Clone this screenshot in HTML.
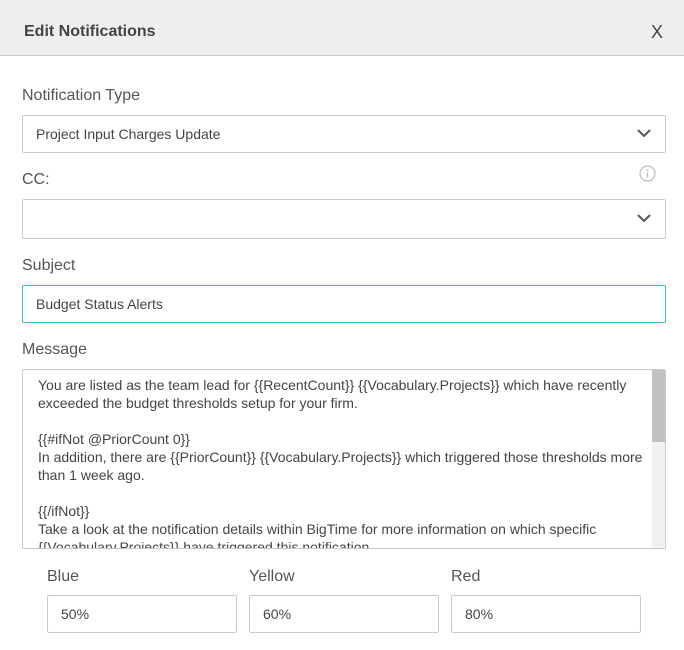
<!DOCTYPE html>
<html><head><style>
*{box-sizing:border-box;margin:0;padding:0}
body{width:684px;height:650px;background:#fff;font-family:"Liberation Sans",Arial,sans-serif;color:#444;position:relative;overflow:hidden}
.a{position:absolute}
.hdr{left:0;top:0;width:684px;height:56px;background:#efeff1;border-bottom:1px solid #c8c8c8}
.lbl{font-size:16px;color:#555}
.box{border:1px solid #c9c9c9;border-radius:2px;background:#fff;font-size:14px;color:#444;padding-left:13px;display:flex;align-items:center}
.chev{position:absolute;right:14px;top:50%;margin-top:-5px}
</style></head><body>
<div class="a hdr"></div>
<div class="a" style="left:24px;top:23px;font-size:16px;font-weight:bold;color:#444">Edit Notifications</div>
<div class="a" style="left:651px;top:22px;font-size:18px;color:#444">X</div>

<div class="a lbl" style="left:22px;top:87px">Notification Type</div>
<div class="a box" style="left:22px;top:115px;width:644px;height:38px">Project Input Charges Update
<svg class="chev" width="14" height="9" viewBox="0 0 14 9"><path d="M1 1l6 6 6-6" fill="none" stroke="#555" stroke-width="2"/></svg></div>

<div class="a lbl" style="left:22px;top:171px">CC:</div>
<svg class="a" style="left:639px;top:165px" width="17" height="17" viewBox="0 0 17 17"><circle cx="8.5" cy="8.5" r="7.5" fill="none" stroke="#bbb" stroke-width="1.2"/><circle cx="8.5" cy="5" r="1" fill="#bbb"/><path d="M8.5 7.5v5" stroke="#bbb" stroke-width="1.4"/></svg>
<div class="a box" style="left:22px;top:199px;width:644px;height:40px">
<svg class="chev" width="14" height="9" viewBox="0 0 14 9"><path d="M1 1l6 6 6-6" fill="none" stroke="#555" stroke-width="2"/></svg></div>

<div class="a lbl" style="left:22px;top:257px">Subject</div>
<div class="a box" style="left:22px;top:285px;width:644px;height:38px;border-color:#3bbcc6">Budget Status Alerts</div>

<div class="a lbl" style="left:22px;top:341px">Message</div>
<div class="a" style="left:22px;top:369px;width:644px;height:180px;border:1px solid #c9c9c9;border-radius:2px;overflow:hidden">
<div style="position:absolute;left:15px;top:6px;width:612px;font-size:14px;line-height:18px;color:#444">You are listed as the team lead for {{RecentCount}} {{Vocabulary.Projects}} which have recently exceeded the budget thresholds setup for your firm.<br><br>{{#ifNot @PriorCount 0}}<br>In addition, there are {{PriorCount}} {{Vocabulary.Projects}} which triggered those thresholds more than 1 week ago.<br><br>{{/ifNot}}<br>Take a look at the notification details within BigTime for more information on which specific {{Vocabulary.Projects}} have triggered this notification.</div>
<div style="position:absolute;right:0;top:0;width:13px;height:100%;background:#f1f1f1"></div>
<div style="position:absolute;right:0;top:0;width:13px;height:72px;background:#c1c1c1"></div>
</div>

<div class="a lbl" style="left:47px;top:568px">Blue</div>
<div class="a lbl" style="left:249px;top:568px">Yellow</div>
<div class="a lbl" style="left:451px;top:568px">Red</div>
<div class="a box" style="left:47px;top:595px;width:190px;height:38px">50%</div>
<div class="a box" style="left:249px;top:595px;width:190px;height:38px">60%</div>
<div class="a box" style="left:451px;top:595px;width:190px;height:38px">80%</div>
</body></html>
